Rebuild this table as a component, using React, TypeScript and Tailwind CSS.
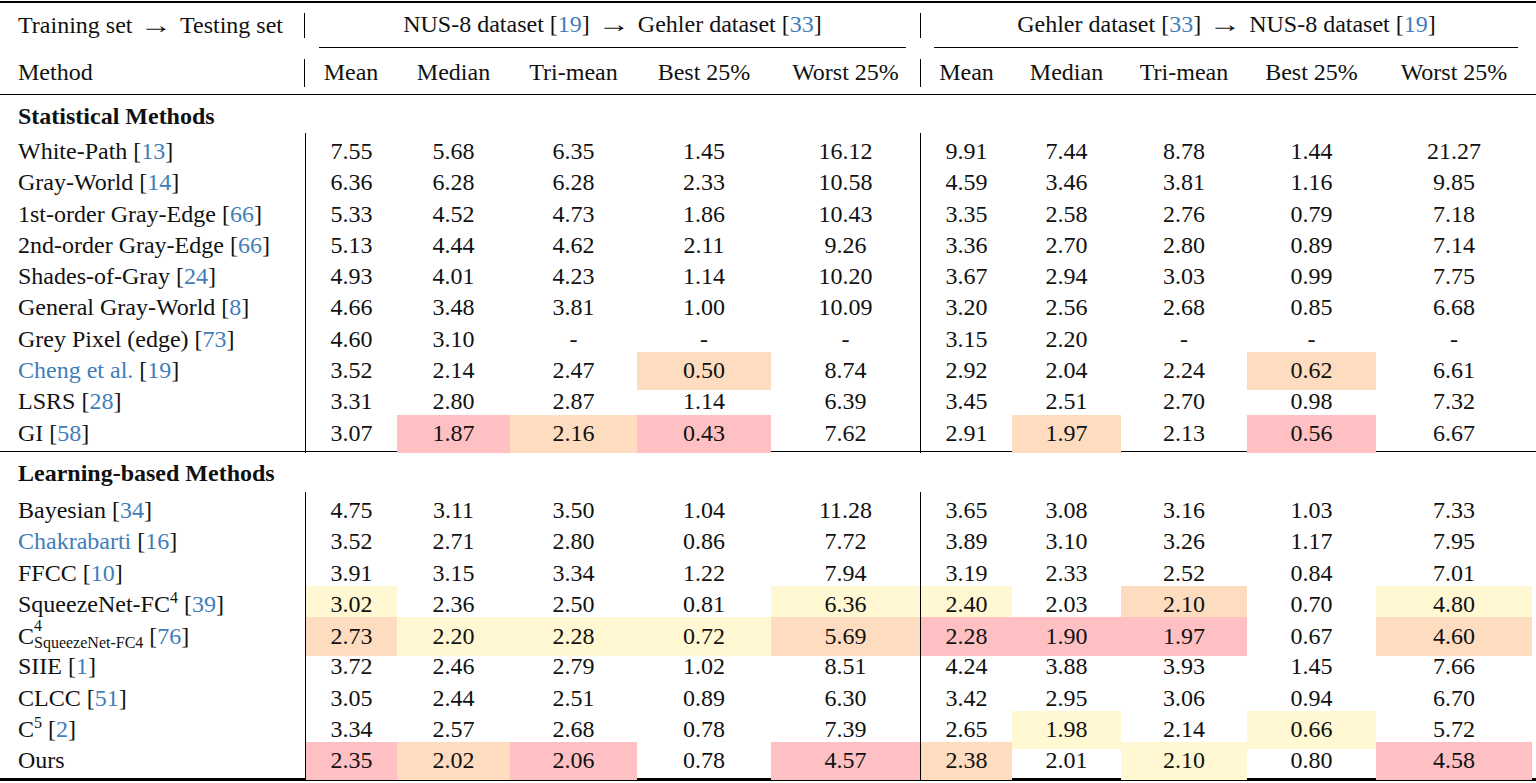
import type { ReactNode } from 'react';

const COLS =
  'grid grid-cols-[305px_92px_113px_127px_134px_149px_92px_109px_126px_129px_156px]';

const HL: Record<string, string> = {
  r: 'bg-[#ffc0c3]',
  o: 'bg-[#fedcc0]',
  y: 'bg-[#fff8d2]',
};

function Cite({ n }: { n: string }) {
  return (
    <>
      [<span className="text-[#3f7dbb]">{n}</span>]
    </>
  );
}

function Arrow() {
  return <span className="inline-block mx-[6px] scale-x-[1.35]">→</span>;
}

type Row = { label: ReactNode; vals: string[] };

const statistical: Row[] = [
  { label: <>White-Path <Cite n="13" /></>, vals: '7.55 5.68 6.35 1.45 16.12 9.91 7.44 8.78 1.44 21.27'.split(' ') },
  { label: <>Gray-World <Cite n="14" /></>, vals: '6.36 6.28 6.28 2.33 10.58 4.59 3.46 3.81 1.16 9.85'.split(' ') },
  { label: <>1st-order Gray-Edge <Cite n="66" /></>, vals: '5.33 4.52 4.73 1.86 10.43 3.35 2.58 2.76 0.79 7.18'.split(' ') },
  { label: <>2nd-order Gray-Edge <Cite n="66" /></>, vals: '5.13 4.44 4.62 2.11 9.26 3.36 2.70 2.80 0.89 7.14'.split(' ') },
  { label: <>Shades-of-Gray <Cite n="24" /></>, vals: '4.93 4.01 4.23 1.14 10.20 3.67 2.94 3.03 0.99 7.75'.split(' ') },
  { label: <>General Gray-World <Cite n="8" /></>, vals: '4.66 3.48 3.81 1.00 10.09 3.20 2.56 2.68 0.85 6.68'.split(' ') },
  { label: <>Grey Pixel (edge) <Cite n="73" /></>, vals: '4.60 3.10 - - - 3.15 2.20 - - -'.split(' ') },
  {
    label: <><span className="text-[#3f7dbb]">Cheng et al.</span> <Cite n="19" /></>,
    vals: '3.52 2.14 2.47 0.50:o 8.74 2.92 2.04 2.24 0.62:o 6.61'.split(' '),
  },
  { label: <>LSRS <Cite n="28" /></>, vals: '3.31 2.80 2.87 1.14 6.39 3.45 2.51 2.70 0.98 7.32'.split(' ') },
  { label: <>GI <Cite n="58" /></>, vals: '3.07 1.87:r 2.16:o 0.43:r 7.62 2.91 1.97:o 2.13 0.56:r 6.67'.split(' ') },
];

const learning: Row[] = [
  { label: <>Bayesian <Cite n="34" /></>, vals: '4.75 3.11 3.50 1.04 11.28 3.65 3.08 3.16 1.03 7.33'.split(' ') },
  {
    label: <><span className="text-[#3f7dbb]">Chakrabarti</span> <Cite n="16" /></>,
    vals: '3.52 2.71 2.80 0.86 7.72 3.89 3.10 3.26 1.17 7.95'.split(' '),
  },
  { label: <>FFCC <Cite n="10" /></>, vals: '3.91 3.15 3.34 1.22 7.94 3.19 2.33 2.52 0.84 7.01'.split(' ') },
  {
    label: <>SqueezeNet-FC<sup className="text-[16px] top-[-9px]">4</sup> <Cite n="39" /></>,
    vals: '3.02:y 2.36 2.50 0.81 6.36:y 2.40:y 2.03 2.10:o 0.70 4.80:y'.split(' '),
  },
  {
    label: (
      <>
        C
        <span className="inline-flex flex-col text-[16px] leading-[17px] align-[13px]">
          <span>4</span>
          <span>SqueezeNet-FC4</span>
        </span>{' '}
        <Cite n="76" />
      </>
    ),
    vals: '2.73:o 2.20:y 2.28:y 0.72:y 5.69:o 2.28:r 1.90:r 1.97:r 0.67 4.60:o'.split(' '),
  },
  { label: <>SIIE <Cite n="1" /></>, vals: '3.72 2.46 2.79 1.02 8.51 4.24 3.88 3.93 1.45 7.66'.split(' ') },
  { label: <>CLCC <Cite n="51" /></>, vals: '3.05 2.44 2.51 0.89 6.30 3.42 2.95 3.06 0.94 6.70'.split(' ') },
  {
    label: <>C<sup className="text-[16px] top-[-9px]">5</sup> <Cite n="2" /></>,
    vals: '3.34 2.57 2.68 0.78 7.39 2.65 1.98:y 2.14 0.66:y 5.72'.split(' '),
  },
  { label: <>Ours</>, vals: '2.35:r 2.02:o 2.06:r 0.78 4.57:r 2.38:o 2.01 2.10:y 0.80 4.58:r'.split(' ') },
];

function DataRow({ row }: { row: Row }) {
  return (
    <div className={`${COLS} h-[31.3px]`}>
      <div className="flex items-center pl-[18px] pb-[2px] whitespace-nowrap">
        <span>{row.label}</span>
      </div>
      {row.vals.map((v, i) => {
        const [num, c] = v.split(':');
        const line = i === 0 || i === 5 ? 'border-l border-black' : '';
        return (
          <div key={i} className={`flex items-center justify-center pb-[2px] ${line} ${c ? HL[c] : ''}`}>
            {num}
          </div>
        );
      })}
    </div>
  );
}

const heads = ['Mean', 'Median', 'Tri-mean', 'Best 25%', 'Worst 25%'];

export default function App() {
  return (
    <div className="w-[1536px] h-[783px] bg-white text-[#111] text-[24px] leading-normal pt-[1px] font-['Liberation_Serif','Times_New_Roman',serif]">
      <div className="h-[2px] bg-black" />

      {/* header line 1 */}
      <div className={`${COLS} h-[45px]`}>
        <div className="flex items-center">
          <div className="flex-1 pl-[18px] pb-[2px] whitespace-nowrap">
            Training set <Arrow /> Testing set
          </div>
          <div className="h-[25px] w-px bg-black" />
        </div>
        <div className="col-span-5 flex flex-col">
          <div className="flex-1 flex items-center justify-center pb-[2px] whitespace-nowrap">
            <span>
              NUS-8 dataset <Cite n="19" /> <Arrow /> Gehler dataset <Cite n="33" />
            </span>
          </div>
          <div className="mx-[14px] h-px bg-black" />
        </div>
        <div className="col-span-5 flex flex-col">
          <div className="flex-1 flex items-center">
            <div className="h-[25px] w-px bg-black" />
            <div className="flex-1 text-center pb-[2px] whitespace-nowrap">
              Gehler dataset <Cite n="33" /> <Arrow /> NUS-8 dataset <Cite n="19" />
            </div>
          </div>
          <div className="mx-[14px] h-px bg-black" />
        </div>
      </div>

      {/* header line 2 */}
      <div className={`${COLS} h-[46px]`}>
        <div className="flex items-center pt-[4px]">
          <div className="flex-1 pl-[18px] pb-[3px]">Method</div>
          <div className="h-[28px] w-px bg-black" />
        </div>
        {[...heads, ...heads].map((h, i) => (
          <div key={i} className="flex items-center pt-[4px]">
            {i === 5 && <div className="h-[28px] w-px bg-black" />}
            <div className="flex-1 text-center pb-[3px] whitespace-nowrap">{h}</div>
          </div>
        ))}
      </div>

      <div className="h-px bg-black" />

      <div className="h-[38px] flex items-center pt-[4px] pl-[18px] font-bold">Statistical Methods</div>
      {statistical.map((r, i) => (
        <DataRow key={i} row={r} />
      ))}

      <div className="mt-[5px] h-px bg-black" />

      <div className="h-[40px] flex items-center pt-[2px] pl-[18px] font-bold">Learning-based Methods</div>
      {learning.map((r, i) => (
        <DataRow key={i} row={r} />
      ))}

      <div className="mt-[4px] h-[3px] bg-black" />
    </div>
  );
}
